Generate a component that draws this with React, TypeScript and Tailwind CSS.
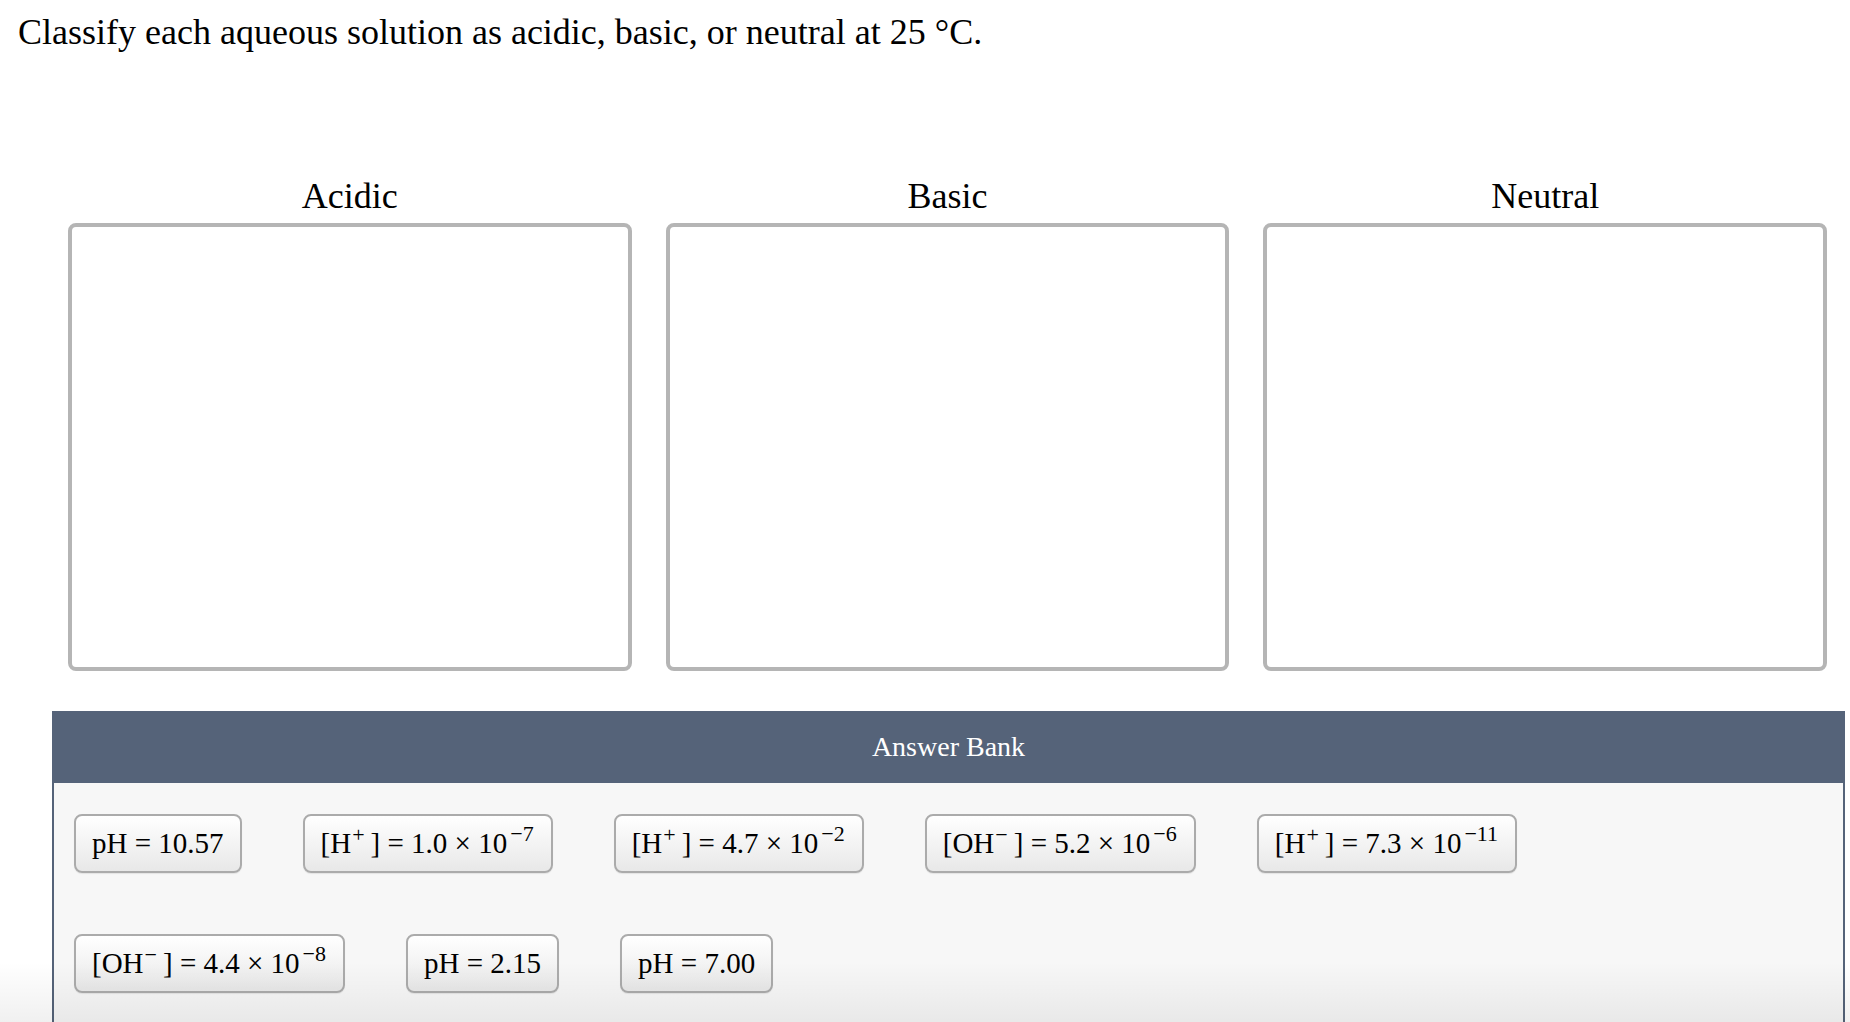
import React from "react";

const serif = { fontFamily: '"Liberation Serif", "Times New Roman", serif' };

// raised small text for charges and exponents
function Sup({ children, ion }: { children: React.ReactNode; ion?: boolean }) {
    return (
        <span className={ion ? "relative top-[-11px] text-[22px] leading-none ml-[1px] mr-[6px]" : "relative top-[-12px] text-[22px] leading-none ml-[3px] mr-[1px]"}>
            {children}
        </span>
    );
}

function Chip({ children }: { children: React.ReactNode }) {
    return (
        <div className="h-[59px] px-[16px] flex items-center rounded-[8px] border-2 border-[#ababab] bg-gradient-to-b from-white to-[#e8e8e8] text-[29px] text-black whitespace-nowrap shadow-[0_1px_1px_rgba(0,0,0,0.08)]">
            <span className="leading-none">{children}</span>
        </div>
    );
}

const H = () => (
    <>
        [H<Sup ion>+</Sup>]
    </>
);
const OH = () => (
    <>
        [OH<Sup ion>−</Sup>]
    </>
);

export default function App() {
    const categories = ["Acidic", "Basic", "Neutral"];

    return (
        <div className="relative w-full h-[1022px] overflow-hidden bg-white text-black" style={serif}>
            {/* Prompt */}
            <h1 className="pl-[18px] pt-[12px] text-[36px] leading-[40px] font-normal">
                Classify each aqueous solution as acidic, basic, or neutral at 25 °C.
            </h1>

            {/* Drop zones */}
            <div className="ml-[68px] mt-[124px] w-[1759px] grid grid-cols-3 gap-x-[34px]">
                {categories.map(c => (
                    <div key={c} className="flex flex-col">
                        <div className="text-center text-[36px] leading-[40px] mb-[7px]">{c}</div>
                        <div className="h-[448px] rounded-[8px] border-4 border-[#b5b5b5] bg-white" />
                    </div>
                ))}
            </div>

            {/* Answer bank */}
            <div className="ml-[52px] mt-[40px] w-[1793px] border-x-2 border-[#556379]">
                <div className="h-[72px] bg-[#556379] text-white text-center text-[28px] leading-[72px]">Answer Bank</div>
                <div className="bg-[#f7f7f7] pt-[31px] pl-[20px] pb-[60px] flex flex-col gap-y-[61px]">
                    <div className="flex gap-x-[61px]">
                        <Chip>pH = 10.57</Chip>
                        <Chip>
                            <H /> = 1.0 × 10<Sup>−7</Sup>
                        </Chip>
                        <Chip>
                            <H /> = 4.7 × 10<Sup>−2</Sup>
                        </Chip>
                        <Chip>
                            <OH /> = 5.2 × 10<Sup>−6</Sup>
                        </Chip>
                        <Chip>
                            <H /> = 7.3 × 10<Sup>−11</Sup>
                        </Chip>
                    </div>
                    <div className="flex gap-x-[61px]">
                        <Chip>
                            <OH /> = 4.4 × 10<Sup>−8</Sup>
                        </Chip>
                        <Chip>pH = 2.15</Chip>
                        <Chip>pH = 7.00</Chip>
                    </div>
                </div>
            </div>

            {/* bottom fade */}
            <div className="pointer-events-none absolute bottom-0 left-0 w-full h-[60px] bg-gradient-to-b from-transparent to-[rgba(0,0,0,0.06)]" />
        </div>
    );
}
